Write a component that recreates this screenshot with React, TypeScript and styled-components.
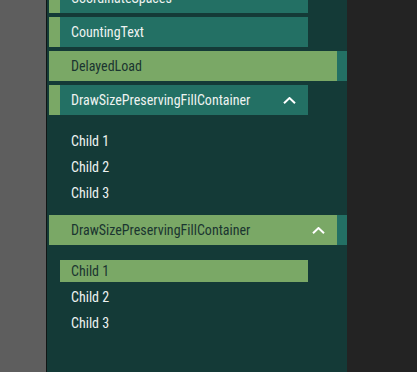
import React from 'react';
import styled, { createGlobalStyle } from 'styled-components';

const GlobalStyle = createGlobalStyle`
  html, body {
    margin: 0;
    padding: 0;
    background: #232323;
  }
`;

const colors = {
  teal: '#237064',
  green: '#7aa866',
  panel: '#143a37',
  darkText: '#1a3530',
  lightText: '#eef3f1',
};

const Screen = styled.div`
  display: flex;
  width: 417px;
  height: 372px;
  overflow: hidden;
  font-family: "Roboto Condensed", "Liberation Sans Narrow", Roboto, sans-serif;
  font-stretch: condensed;
  font-size: 14px;
`;

const LeftGutter = styled.div`
  width: 46px;
  background: #5e5e5e;
  border-right: 1px solid #101615;
`;

const Panel = styled.div`
  width: 300px;
  background: ${colors.panel};
  overflow: hidden;
`;

const List = styled.div`
  display: flex;
  flex-direction: column;
  gap: 4px;
  margin-top: -17px;
  padding-left: 2px;
`;

const RightArea = styled.div`
  flex: 1;
  background: #232323;
`;

const Row = styled.div<{ $active?: boolean }>`
  display: flex;
  height: 30px;
  width: ${(p) => (p.$active ? '298px' : '259px')};
  background: ${(p) => (p.$active ? colors.green : colors.teal)};
  color: ${(p) => (p.$active ? colors.darkText : colors.lightText)};
  border-right: ${(p) => (p.$active ? `10px solid ${colors.teal}` : 'none')};
  box-sizing: border-box;
`;

const Strip = styled.div`
  width: 11px;
  background: ${colors.green};
`;

const Label = styled.div`
  flex: 1;
  display: flex;
  align-items: center;
  padding-left: 11px;
  white-space: nowrap;
`;

const Chevron = styled.svg`
  align-self: center;
  margin-right: 12px;
`;

const Group = styled.div`
  display: flex;
  flex-direction: column;
  gap: 4px;
  padding: 11px 0 7px 11px;
`;

const Child = styled.div<{ $selected?: boolean }>`
  display: flex;
  align-items: center;
  height: 22px;
  width: 248px;
  padding-left: 11px;
  box-sizing: border-box;
  background: ${(p) => (p.$selected ? colors.green : 'transparent')};
  color: ${(p) => (p.$selected ? colors.darkText : colors.lightText)};
`;

const Up = () => (
  <Chevron width="13" height="7" viewBox="0 0 13 7">
    <polyline points="1,6.2 6.5,1 12,6.2" fill="none" stroke="#ffffff" strokeWidth="2" />
  </Chevron>
);

type Item = { name: string; active?: boolean; open?: boolean; selected?: number };

const items: Item[] = [
  { name: 'CoordinateSpaces' },
  { name: 'CountingText' },
  { name: 'DelayedLoad', active: true },
  { name: 'DrawSizePreservingFillContainer', open: true },
  { name: 'DrawSizePreservingFillContainer', active: true, open: true, selected: 0 },
];

const children = ['Child 1', 'Child 2', 'Child 3'];

export default function App() {
  return (
    <>
      <GlobalStyle />
      <Screen>
        <LeftGutter />
        <Panel>
          <List>
            {items.map((it, i) => (
              <React.Fragment key={i}>
                <Row $active={it.active}>
                  <Strip />
                  <Label>{it.name}</Label>
                  {it.open && <Up />}
                </Row>
                {it.open && (
                  <Group>
                    {children.map((c, j) => (
                      <Child key={c} $selected={it.selected === j}>
                        {c}
                      </Child>
                    ))}
                  </Group>
                )}
              </React.Fragment>
            ))}
          </List>
        </Panel>
        <RightArea />
      </Screen>
    </>
  );
}
